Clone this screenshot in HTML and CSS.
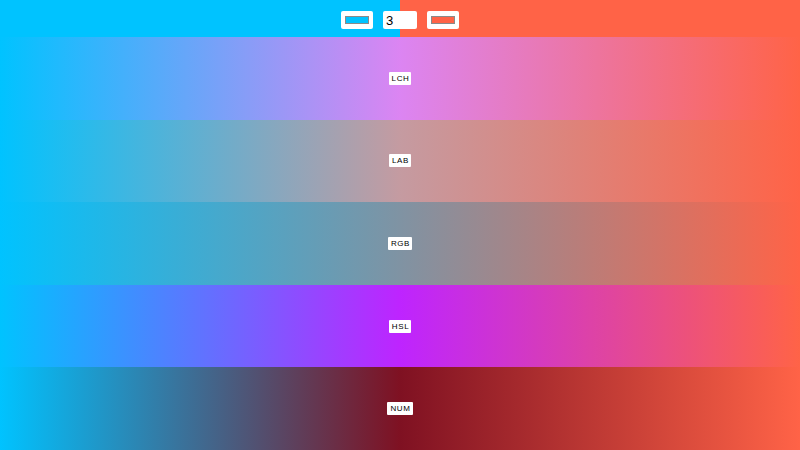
FILE: index.html
```html
<!DOCTYPE html>
<html>
	<head>
		<meta charset="UTF-8">
		<title>mix</title>
		<link rel="stylesheet" href="styles.css">
	</head>
	<body>
		<div id="wrap">
			<nav id="bar">
				<input type="color" value="#00c3ff"/>
				<input type="number" value="3" class="steps"/>
				<input type="color" value="#ff6347"/>
			</nav>
			<div class="row lch"><span class="tag">LCH</span></div>
			<div class="row lab"><span class="tag">LAB</span></div>
			<div class="row rgb"><span class="tag">RGB</span></div>
			<div class="row hsl"><span class="tag">HSL</span></div>
			<div class="row num"><span class="tag">NUM</span></div>
		</div>
	</body>
</html>
```
FILE: styles.css
```css
html, body {
	margin: 0;
	height: 100%;
}
body {
	font-family: "Liberation Sans", Arial, sans-serif;
}
#wrap {
	height: 100%;
	display: flex;
	flex-direction: column;
}
#bar {
	height: 37px;
	flex: none;
	display: flex;
	align-items: center;
	justify-content: center;
	gap: 10px;
	padding-top: 3px;
	box-sizing: border-box;
	background: linear-gradient(to right, #00c3ff 50%, #ff6347 50%);
}
input[type=color] {
	-webkit-appearance: none;
	appearance: none;
	width: 32px;
	height: 18px;
	margin: 0;
	padding: 0;
	border: 0;
	border-radius: 2px;
	background: #fff;
	cursor: pointer;
}
input[type=color]::-webkit-color-swatch-wrapper {
	padding: 5px 4px;
}
input[type=color]::-webkit-color-swatch {
	border: 1px solid #8a8a8a;
	border-radius: 0;
}
.steps {
	width: 34px;
	height: 18px;
	margin: 0;
	padding: 0 3px;
	box-sizing: border-box;
	border: 0;
	border-radius: 2px;
	background: #fff;
	font: 13px "Liberation Sans", Arial, sans-serif;
	color: #000;
	outline: none;
}
.steps::-webkit-inner-spin-button,
.steps::-webkit-outer-spin-button {
	-webkit-appearance: none;
	margin: 0;
}
.row {
	flex: 1;
	display: flex;
	align-items: center;
	justify-content: center;
}
.tag {
	background: #fff;
	color: #000;
	font: 8px "Liberation Sans", Arial, sans-serif;
	letter-spacing: 0.6px;
	padding: 2px 2px 2px 3px;
	border-radius: 1px;
}
/* start, midpoint mixed in each space, end */
.lch {
	background: linear-gradient(to right, #00c3ff, #d88ae9, #ff6347);
	background: linear-gradient(to right in srgb, #00c3ff, color-mix(in lch, #00c3ff, #ff6347), #ff6347);
}
.lab {
	background: linear-gradient(to right, #00c3ff, #c6999f, #ff6347);
	background: linear-gradient(to right in srgb, #00c3ff, color-mix(in lab, #00c3ff, #ff6347), #ff6347);
}
.rgb {
	background: linear-gradient(to right, #00c3ff, #ff6347);
}
.hsl {
	background: linear-gradient(to right, #00c3ff, #be24ff, #ff6347);
}
.num {
	background: linear-gradient(to right, #00c3ff, #7f1122, #ff6347);
}
```
